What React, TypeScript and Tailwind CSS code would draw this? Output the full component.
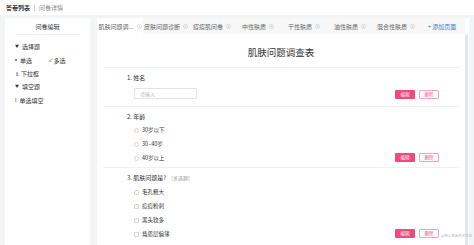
import React from "react";

const tabs = [
  "肌肤问题调...",
  "皮肤问题诊断",
  "痘痘肌问卷",
  "中性肤质",
  "干性肤质",
  "油性肤质",
  "混合性肤质",
];

const TabIcon = () => (
  <svg width="5" height="5" viewBox="0 0 10 10" className="shrink-0">
    <circle cx="5" cy="5" r="4.2" fill="none" stroke="#c8c8c8" strokeWidth="1.2" />
    <circle cx="5" cy="5" r="1.4" fill="#c8c8c8" />
  </svg>
);

const Buttons = ({ mb }: { mb: string }) => (
  <div className={`flex gap-[4px] self-end ${mb}`}>
    <button className="h-[9px] w-[20px] rounded-[1px] bg-[#ee4a7b] text-[4.5px] leading-[9px] text-white">
      编辑
    </button>
    <button className="h-[9px] w-[20px] rounded-[1px] border border-[#f0a5bd] bg-white text-[4.5px] leading-[7px] text-[#ee4a7b]">
      删除
    </button>
  </div>
);

const Radio = ({ label }: { label: string }) => (
  <div className="flex h-[14px] items-center gap-[3px] pl-[7px]">
    <span className="h-[5px] w-[5px] rounded-full border border-[#d4d4d4]" />
    <span>{label}</span>
  </div>
);

const Check = ({ label }: { label: string }) => (
  <div className="flex h-[14px] items-center gap-[3px] pl-[7px]">
    <span className="h-[5px] w-[5px] rounded-[1px] border border-[#d4d4d4]" />
    <span>{label}</span>
  </div>
);

export default function App() {
  return (
    <div
      className="relative h-[245px] w-[474px] overflow-hidden bg-[#f3f4f6] text-[#333]"
      style={{ fontFamily: '"Noto Sans CJK SC", "Noto Sans", sans-serif' }}
    >
      <header className="flex h-[15px] items-center gap-[4px] bg-white px-[6px] text-[6px]">
        <span className="font-bold text-[#333]">答卷列表</span>
        <span className="h-[6px] w-px bg-[#ccc]" />
        <span className="text-[#888]">问卷详情</span>
      </header>

      <div className="flex gap-[7px] pl-[5px] pt-[3px]">
        <aside className="h-[240px] w-[85px] rounded-[3px] bg-white text-[6px]">
          <div className="flex h-[16px] items-center justify-center pt-[1px]">问卷编辑</div>
          <div className="mx-[10px] h-px bg-[#eee]" />
          <div className="flex flex-col pl-[10px] pt-[4px]">
            <div className="flex h-[14px] items-center gap-[3px]">
              <span className="text-[4px]">▼</span>
              <span>选择题</span>
            </div>
            <div className="flex h-[14px] items-center">
              <span className="flex w-[34px] items-center gap-[3px]">
                <span className="h-[2px] w-[2px] rounded-full bg-[#555]" />
                <span>单选</span>
              </span>
              <span className="flex items-center gap-[1px]">
                <span className="text-[5px]">✓</span>
                <span>多选</span>
              </span>
            </div>
            <div className="flex h-[13px] items-center gap-[2px]">
              <span className="text-[5px]">⇕</span>
              <span>下拉框</span>
            </div>
            <div className="flex h-[12px] items-center gap-[3px]">
              <span className="text-[4px]">▼</span>
              <span>填空题</span>
            </div>
            <div className="flex h-[16px] items-center gap-[3px]">
              <span className="text-[5px]">I</span>
              <span>单选填空</span>
            </div>
          </div>
        </aside>

        <main className="flex h-[240px] w-[372px] rounded-tl-[3px] bg-white">
          <div className="flex w-[368px] flex-col">
            <div className="flex h-[16px] bg-[#f7f7f8] text-[6px] text-[#666]">
              {tabs.map((t, i) => (
                <div
                  key={t}
                  className={`flex w-[46px] items-center justify-center gap-[3px] ${
                    i === 0 ? "bg-white" : ""
                  }`}
                >
                  <span>{t}</span>
                  <TabIcon />
                </div>
              ))}
              <div className="flex w-[46px] items-center justify-center text-[#4a7ccc]">
                + 添加页面
              </div>
            </div>

            <div className="flex h-[33px] items-center justify-center pt-[3px] text-[9.5px] text-[#333]">
              肌肤问题调查表
            </div>
            <div className="mx-[6px] h-px bg-[#f0f0f0]" />

            <div className="flex justify-between pb-[7px] pl-[30px] pr-[26px] pt-[6px] text-[6px]">
              <div className="flex flex-col">
                <div className="h-[8px] leading-[8px]">1. 姓名</div>
                <div className="ml-[7px] mt-[6px] flex h-[11px] w-[63px] items-center rounded-[1px] border border-[#e3e3e3] pl-[5px] text-[5px] text-[#bbb]">
                  请输入
                </div>
              </div>
              <Buttons mb="mb-0" />
            </div>
            <div className="mx-[6px] h-px bg-[#f0f0f0]" />

            <div className="flex justify-between pb-[2px] pl-[30px] pr-[26px] pt-[6px] text-[6px]">
              <div className="flex flex-col">
                <div className="h-[8px] leading-[8px]">2. 年龄</div>
                <div className="mt-[2px] flex flex-col text-[5.5px]">
                  <Radio label="30岁以下" />
                  <Radio label="30~40岁" />
                  <Radio label="40岁以上" />
                </div>
              </div>
              <Buttons mb="mb-[3px]" />
            </div>
            <div className="mx-[6px] h-px bg-[#f0f0f0]" />

            <div className="flex justify-between pb-[2px] pl-[30px] pr-[26px] pt-[6px] text-[6px]">
              <div className="flex flex-col">
                <div className="flex h-[8px] items-center gap-[5px] leading-[8px]">
                  <span>3. 肌肤问题是?</span>
                  <span className="text-[5px] text-[#999]">[多选题]</span>
                </div>
                <div className="mt-[3px] flex flex-col text-[5.5px]">
                  <Check label="毛孔粗大" />
                  <Check label="痘痘粉刺" />
                  <Check label="黑头较多" />
                  <Check label="角质层偏薄" />
                </div>
              </div>
              <Buttons mb="mb-[3px]" />
            </div>
          </div>
          <div className="mt-[16px] h-[224px] w-[3px] rounded-full bg-[#e6e6e6]" />
        </main>
      </div>

      <div className="absolute left-[441px] top-[233px] text-[3.5px] text-[#b8b8b8]">
        @稀土掘金技术社区
      </div>
    </div>
  );
}
